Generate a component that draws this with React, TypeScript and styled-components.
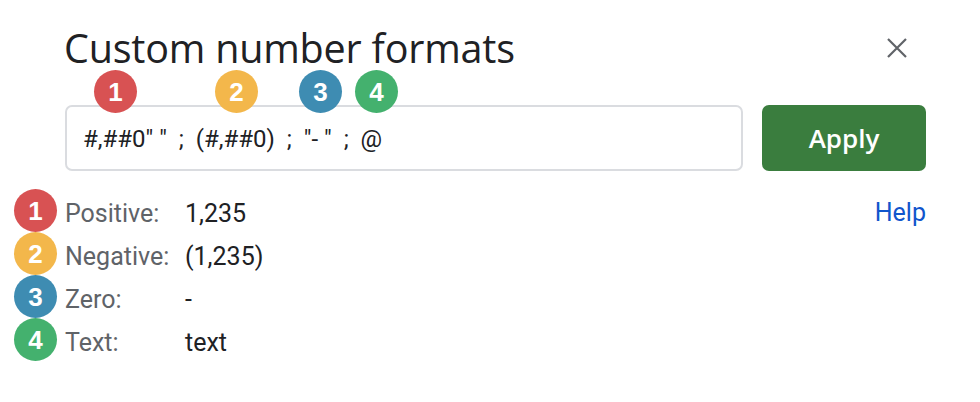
import styled, { createGlobalStyle } from "styled-components";

const GlobalStyle = createGlobalStyle`
  html, body {
    margin: 0;
    padding: 0;
    background: #ffffff;
  }
  body {
    font-family: Roboto, "Noto Sans", Arial, sans-serif;
  }
`;

const badgeColors: Record<number, string> = {
  1: "#d85253",
  2: "#f3b74b",
  3: "#3e8cb2",
  4: "#44b16e",
};

const Dialog = styled.div`
  width: 980px;
  height: 402px;
  box-sizing: border-box;
  padding: 21px 54px 0 64px;
`;

const Header = styled.div`
  display: flex;
  align-items: flex-start;
  justify-content: space-between;
`;

const Title = styled.h1`
  margin: 0;
  font-family: "Open Sans", Roboto, sans-serif;
  font-size: 39.5px;
  font-weight: 400;
  line-height: 54px;
  color: #202124;
  letter-spacing: -0.2px;
`;

const CloseButton = styled.button`
  display: flex;
  align-items: center;
  justify-content: center;
  width: 20px;
  height: 20px;
  margin: 17px 19px 0 0;
  padding: 0;
  border: none;
  background: none;
  cursor: pointer;
`;

const FormatRow = styled.div`
  display: flex;
  gap: 19px;
  margin-top: 30px;
  margin-left: 1px;
`;

const InputWrap = styled.div`
  position: relative;
  flex: 1;
`;

const FormatInput = styled.div`
  height: 66px;
  box-sizing: border-box;
  display: flex;
  align-items: center;
  padding: 2px 16px 0 16px;
  border: 2px solid #dadce0;
  border-radius: 7px;
  font-size: 24px;
  color: #202124;
  white-space: pre;
`;

const Badge = styled.span<{ $n: number; $size?: number }>`
  display: flex;
  align-items: center;
  justify-content: center;
  flex: none;
  width: ${({ $size }) => $size ?? 42}px;
  height: ${({ $size }) => $size ?? 42}px;
  border-radius: 50%;
  background: ${({ $n }) => badgeColors[$n]};
  color: #ffffff;
  font-family: "Liberation Sans", Arial, sans-serif;
  font-weight: 700;
  font-size: 26px;
  line-height: 1;
`;

const FloatingBadge = styled(Badge)<{ $left: number }>`
  position: absolute;
  top: -35px;
  left: ${({ $left }) => $left}px;
`;

const ApplyButton = styled.button`
  width: 164px;
  height: 66px;
  border: none;
  border-radius: 7px;
  background: #3a7d3e;
  color: #ffffff;
  font-family: "Open Sans", Roboto, sans-serif;
  font-size: 26px;
  font-weight: 600;
  cursor: pointer;
`;

const Preview = styled.div`
  display: flex;
  justify-content: space-between;
  margin-top: 18px;
  margin-left: 1px;
`;

const PreviewList = styled.div`
  display: flex;
  flex-direction: column;
  margin-left: -51px;
`;

const PreviewRow = styled.div`
  display: flex;
  align-items: center;
  height: 43px;
`;

const Label = styled.span`
  width: 120px;
  margin-left: 8px;
  padding-top: 5px;
  font-size: 25px;
  color: #5f6368;
`;

const Value = styled.span`
  padding-top: 5px;
  font-size: 25px;
  color: #202124;
`;

const HelpLink = styled.a`
  margin-top: 9px;
  font-size: 25px;
  color: #1155cc;
  text-decoration: none;
  height: fit-content;
`;

const topBadges = [
  { n: 1, left: 29 },
  { n: 2, left: 150 },
  { n: 3, left: 234 },
  { n: 4, left: 290 },
];

const rows = [
  { n: 1, label: "Positive:", value: "1,235" },
  { n: 2, label: "Negative:", value: "(1,235)" },
  { n: 3, label: "Zero:", value: "-" },
  { n: 4, label: "Text:", value: "text" },
];

export default function App() {
  return (
    <>
      <GlobalStyle />
      <Dialog>
        <Header>
          <Title>Custom number formats</Title>
          <CloseButton aria-label="Close">
            <svg width="20" height="20" viewBox="0 0 20 20">
              <path d="M1 1 L19 19 M19 1 L1 19" stroke="#606368" strokeWidth="2.2" />
            </svg>
          </CloseButton>
        </Header>

        <FormatRow>
          <InputWrap>
            {topBadges.map((b) => (
              <FloatingBadge key={b.n} $n={b.n} $left={b.left} $size={43}>
                {b.n}
              </FloatingBadge>
            ))}
            <FormatInput>{'#,##0" "  ;  (#,##0)  ;  "- "  ;  @'}</FormatInput>
          </InputWrap>
          <ApplyButton>Apply</ApplyButton>
        </FormatRow>

        <Preview>
          <PreviewList>
            {rows.map((r) => (
              <PreviewRow key={r.n}>
                <Badge $n={r.n} $size={43}>
                  {r.n}
                </Badge>
                <Label>{r.label}</Label>
                <Value>{r.value}</Value>
              </PreviewRow>
            ))}
          </PreviewList>
          <HelpLink href="#">Help</HelpLink>
        </Preview>
      </Dialog>
    </>
  );
}
